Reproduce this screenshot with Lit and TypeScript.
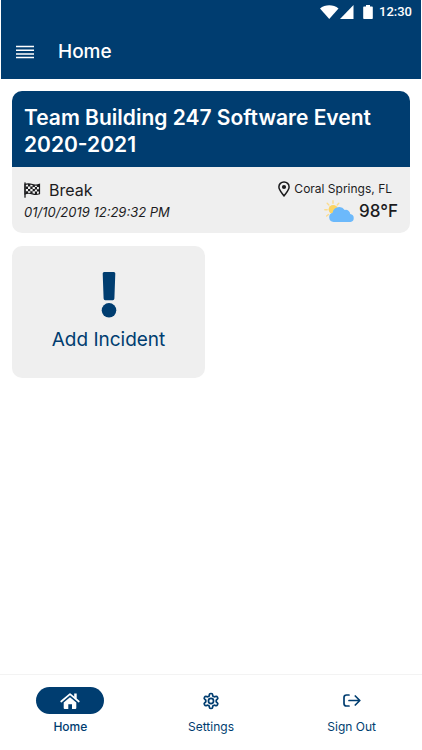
import { LitElement, html, css, svg } from "lit";
import { customElement } from "lit/decorators.js";

const statusIcons = svg`
  <path d="M0 3.400C5-.8 13.500-.8 18.500 3.400L9.250 14z" />
  <path d="M33.500 0v14H20z" />
  <path d="M46 0h4v1.500h2q.8 0 .8.8v10.900q0 .8-.8.8h-8q-.8 0-.8-.8V2.300q0-.8.8-.8h2z" />`;

const flag = svg`
  <path d="M1 .8v14.400" fill="none" stroke="currentColor" stroke-width="1.300" stroke-linecap="round" />
  <path d="M1 2.400c3-1.200 5-.7 7.500.1s4.500.9 7-.1v9.400c-2.500 1-4.500.9-7 .1S4 10.700 1 11.900z" fill="none" stroke="currentColor" stroke-width="1.200" />
  <path d="M4 2h2.300v2.400H4zM8.600 2.800h2.300v2.300H8.600zM12.900 3h2.100v2h-2.100zM1.700 4.600H4v2.300H1.700zM6.300 4.500h2.300v2.400H6.300zM10.900 5.100h2.100v2.300h-2.100zM4 6.900h2.300v2.300H4zM8.600 6.900h2.300v2.400H8.600zM13 7.300h2v2.200h-2zM1.700 9.200H4v1.900H1.700zM6.300 9.200h2.300v2.200H6.300zM10.900 9.400h2.100v2.500h-2.100z" fill="currentColor" />`;

const pin = svg`
  <path d="M6 .9a5 5 0 0 1 5.100 5.100c0 3.200-3.100 6-5.100 8.900C4 12 .9 9.200.9 6A5 5 0 0 1 6 .9z" fill="none" stroke="currentColor" stroke-width="1.500" />
  <circle cx="6" cy="6" r="2.100" fill="currentColor" />`;

const weather = svg`
  <g stroke="#fbdc8e" stroke-width="1.400" stroke-linecap="round">
    <path d="M9 .8v2.400M3.200 3.200l1.700 1.700M.8 9.800h2.400M2.600 16l1.900-1.500M14.800 3.200l-1.600 1.700" />
  </g>
  <circle cx="9.200" cy="9.500" r="4.600" fill="#fcd462" />
  <path d="M9.500 22a4.700 4.700 0 0 1-.9-9.200A6.600 6.600 0 0 1 20.700 10a4.300 4.300 0 0 1 5.500 4.100A4 4 0 0 1 26.500 22z" fill="#6cb9fb" />`;

const house = svg`
  <path d="M10 5.200 16.300 10.500V16q0 1-1 1H12v-4.800H8.300V17H4.700q-1 0-1-1v-5.500z" fill="currentColor" />
  <path d="M1.200 9.500 10 2.100l8.800 7.400" fill="none" stroke="currentColor" stroke-width="1.700" stroke-linecap="round" stroke-linejoin="round" />
  <path d="M14.200 1.400h2.500v5.500l-2.500-2z" fill="currentColor" />`;

const gear = svg`
  <g fill="none" stroke="currentColor" stroke-width="2.300">
    <path d="M12.220 2h-.44a2 2 0 0 0-2 2v.18a2 2 0 0 1-1 1.730l-.43.25a2 2 0 0 1-2 0l-.15-.08a2 2 0 0 0-2.730.73l-.22.38a2 2 0 0 0 .73 2.730l.15.1a2 2 0 0 1 1 1.720v.51a2 2 0 0 1-1 1.740l-.15.09a2 2 0 0 0-.73 2.730l.22.38a2 2 0 0 0 2.730.73l.15-.08a2 2 0 0 1 2 0l.43.25a2 2 0 0 1 1 1.730V20a2 2 0 0 0 2 2h.44a2 2 0 0 0 2-2v-.18a2 2 0 0 1 1-1.730l.43-.25a2 2 0 0 1 2 0l.15.08a2 2 0 0 0 2.730-.73l.22-.39a2 2 0 0 0-.73-2.730l-.15-.08a2 2 0 0 1-1-1.740v-.5a2 2 0 0 1 1-1.740l.15-.09a2 2 0 0 0 .73-2.730l-.22-.38a2 2 0 0 0-2.730-.73l-.15.08a2 2 0 0 1-2 0l-.43-.25a2 2 0 0 1-1-1.730V4a2 2 0 0 0-2-2z" />
    <circle cx="12" cy="12" r="3.400" />
  </g>`;

const signOut = svg`
  <path d="M6 1H3.500Q1 1 1 3.500v6Q1 12 3.500 12H6M6 6.500h10.500M12.300 2l4.500 4.500-4.500 4.500" fill="none" stroke="currentColor" stroke-width="1.700" stroke-linecap="round" stroke-linejoin="round" />`;

@customElement("app-root")
export class AppRoot extends LitElement {
  static styles = css`
    :host {
      display: flex;
      flex-direction: column;
      min-height: 100vh;
      background: #fff;
      color: #1c1c1e;
      font-family: Inter, "Liberation Sans", sans-serif;
    }
    * { box-sizing: border-box; }
    svg { display: block; flex: none; }
    h1, h2, p { margin: 0; font-weight: inherit; }
    button, a { font: inherit; color: inherit; text-decoration: none; }
    button { border: 0; padding: 0; background: none; cursor: pointer; }
    .top { background: #003d70; color: #fff; margin: 0 1px; }
    .status {
      display: flex;
      justify-content: flex-end;
      align-items: center;
      gap: 6px;
      height: 24px;
      padding-right: 9px;
      font: 500 13px/24px Roboto, sans-serif;
    }
    .bar { display: flex; align-items: center; gap: 24px; height: 55px; padding: 0 15px; }
    .bar h1 { font-size: 19px; line-height: 28px; font-weight: 500; }
    main { flex: 1; display: flex; flex-direction: column; gap: 13px; padding: 12px; }
    .card { border-radius: 10px; overflow: hidden; background: #efefef; }
    .card h2 {
      padding: 13px 12px 9px;
      background: #003d70;
      color: #fff;
      font-size: 21px;
      line-height: 27px;
      font-weight: 600;
    }
    .info { display: flex; justify-content: space-between; padding: 12px 12px 10px; }
    .row { display: flex; align-items: center; }
    .break { gap: 8px; font-size: 16px; line-height: 22px; }
    .date { font-size: 13px; line-height: 22px; font-style: italic; }
    .right { display: flex; flex-direction: column; align-items: flex-end; }
    .place { gap: 4px; padding-right: 6px; font-size: 12px; line-height: 20px; }
    .temp { gap: 4px; font-size: 17px; line-height: 24px; font-weight: 500; }
    .tiles { display: grid; grid-template-columns: 1fr 1fr; gap: 12px; }
    .tile {
      display: flex;
      flex-direction: column;
      align-items: center;
      gap: 9px;
      padding: 26px 12px 25px;
      border-radius: 10px;
      background: #efefef;
      color: #003d70;
      font-size: 19px;
      line-height: 26px;
    }
    nav {
      display: grid;
      grid-template-columns: repeat(3, 1fr);
      border-top: 1px solid #f3f3f3;
      padding: 12px 0 13px;
      color: #003d70;
    }
    .tab {
      display: flex;
      flex-direction: column;
      align-items: center;
      gap: 3px;
      font-size: 12px;
      line-height: 20px;
    }
    .pill { display: grid; place-items: center; width: 68px; height: 27px; border-radius: 14px; }
    .active { font-weight: 500; }
    .active .pill { background: #003d70; color: #fff; }
  `;

  render() {
    return html`
      <header class="top">
        <div class="status">
          <svg width="53" height="14" viewBox="0 0 53 14" fill="#fff" aria-hidden="true">${statusIcons}</svg>
          <span>12:30</span>
        </div>
        <div class="bar">
          <button aria-label="Menu">
            <svg width="18" height="14" viewBox="0 0 18 14" stroke="#fff" stroke-width="1.500">
              <path d="M0 1.500h18M0 5.200h18M0 8.900h18M0 12.600h18" />
            </svg>
          </button>
          <h1>Home</h1>
        </div>
      </header>
      <main>
        <section class="card">
          <h2>Team Building 247 Software Event 2020-2021</h2>
          <div class="info">
            <div>
              <div class="row break">
                <svg width="17" height="16" viewBox="0 0 17 16" aria-hidden="true">${flag}</svg>
                Break
              </div>
              <p class="date">01/10/2019 12:29:32 PM</p>
            </div>
            <div class="right">
              <div class="row place">
                <svg width="12" height="16" viewBox="0 0 12 16" aria-hidden="true">${pin}</svg>
                Coral Springs, FL
              </div>
              <div class="row temp">
                <svg width="31" height="23" viewBox="0 0 31 23" aria-hidden="true">${weather}</svg>
                98°F
              </div>
            </div>
          </div>
        </section>
        <div class="tiles">
          <button class="tile">
            <svg width="16" height="46" viewBox="0 0 16 46" fill="currentColor" aria-hidden="true">
              <path d="M3.200 0h9.600q1.600 0 1.500 1.600L13.400 26.600q-.1 1.600-1.600 1.600H4.200q-1.500 0-1.600-1.600L1.700 1.600Q1.600 0 3.200 0z" />
              <circle cx="8" cy="38.300" r="7.300" />
            </svg>
            Add Incident
          </button>
        </div>
      </main>
      <nav>
        <a class="tab active" href="#home">
          <span class="pill"><svg width="20" height="18" viewBox="0 0 20 18" aria-hidden="true">${house}</svg></span>
          Home
        </a>
        <a class="tab" href="#settings">
          <span class="pill"><svg width="18" height="18" viewBox="0 0 24 24" aria-hidden="true">${gear}</svg></span>
          Settings
        </a>
        <a class="tab" href="#sign-out">
          <span class="pill"><svg width="18" height="13" viewBox="0 0 18 13" aria-hidden="true">${signOut}</svg></span>
          Sign Out
        </a>
      </nav>
    `;
  }
}
